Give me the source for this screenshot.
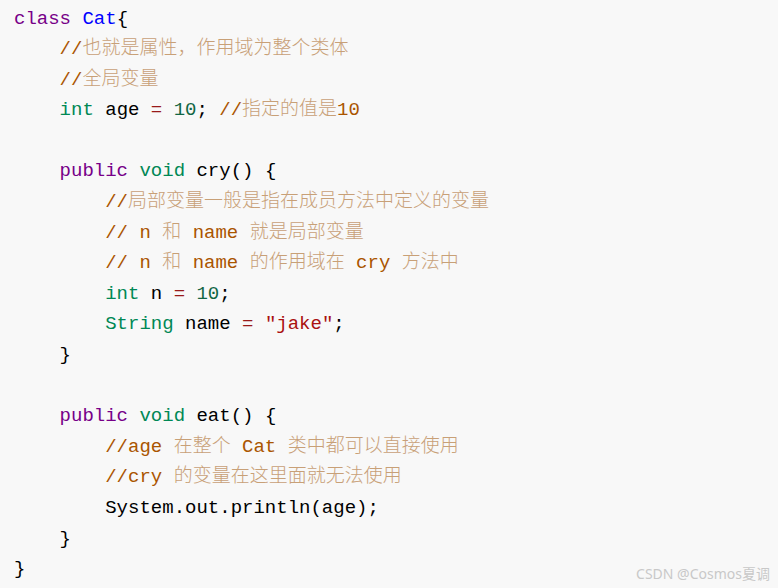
import React from "react"

const kw = "text-[#770088]"
const def = "text-[#0000ff]"
const ty = "text-[#008855]"
const num = "text-[#116644]"
const op = "text-[#981a1a]"
const str = "text-[#aa1111]"
const com = "text-[#aa5500]"
const zh = "text-[#c8a077] font-light"

function Line({ children }: { children?: React.ReactNode }) {
  return <div className="h-[30.6px] leading-[30.6px] whitespace-pre">{children ?? " "}</div>
}

export default function App() {
  return (
    <div className="relative w-[778px] h-[588px] bg-[#f8f8f8] overflow-hidden">
      <div className="pt-[3.5px] pl-[14px] text-[19px] text-black font-['Liberation_Mono','Noto_Sans_CJK_SC',monospace]">
        <Line>
          <span className={kw}>class</span> <span className={def}>Cat</span>{"{"}
        </Line>
        <Line>
          {"    "}<span className={com}>//</span><span className={zh}>也就是属性，作用域为整个类体</span>
        </Line>
        <Line>
          {"    "}<span className={com}>//</span><span className={zh}>全局变量</span>
        </Line>
        <Line>
          {"    "}<span className={ty}>int</span> age <span className={op}>=</span> <span className={num}>10</span>;{" "}
          <span className={com}>//</span><span className={zh}>指定的值是</span><span className={com}>10</span>
        </Line>
        <Line />
        <Line>
          {"    "}<span className={kw}>public</span> <span className={ty}>void</span> cry() {"{"}
        </Line>
        <Line>
          {"        "}<span className={com}>//</span><span className={zh}>局部变量一般是指在成员方法中定义的变量</span>
        </Line>
        <Line>
          {"        "}<span className={com}>// n </span><span className={zh}>和</span>
          <span className={com}> name </span><span className={zh}>就是局部变量</span>
        </Line>
        <Line>
          {"        "}<span className={com}>// n </span><span className={zh}>和</span>
          <span className={com}> name </span><span className={zh}>的作用域在</span>
          <span className={com}> cry </span><span className={zh}>方法中</span>
        </Line>
        <Line>
          {"        "}<span className={ty}>int</span> n <span className={op}>=</span> <span className={num}>10</span>;
        </Line>
        <Line>
          {"        "}<span className={ty}>String</span> name <span className={op}>=</span> <span className={str}>"jake"</span>;
        </Line>
        <Line>{"    }"}</Line>
        <Line />
        <Line>
          {"    "}<span className={kw}>public</span> <span className={ty}>void</span> eat() {"{"}
        </Line>
        <Line>
          {"        "}<span className={com}>//age </span><span className={zh}>在整个</span>
          <span className={com}> Cat </span><span className={zh}>类中都可以直接使用</span>
        </Line>
        <Line>
          {"        "}<span className={com}>//cry </span><span className={zh}>的变量在这里面就无法使用</span>
        </Line>
        <Line>{"        System.out.println(age);"}</Line>
        <Line>{"    }"}</Line>
        <Line>{"}"}</Line>
      </div>
      <div className="absolute right-[8px] bottom-[4px] text-[14px] text-[#c8c8c8] font-['Noto_Sans','Noto_Sans_CJK_SC',sans-serif]">
        CSDN @Cosmos夏调
      </div>
    </div>
  )
}
